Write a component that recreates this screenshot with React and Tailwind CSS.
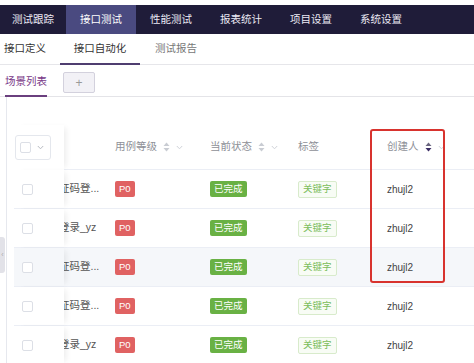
import React from 'react';

const SortIcon = ({ active }) => (
  <svg width="7" height="10" viewBox="0 0 7 10" className="ml-[6px]">
    <path d="M3.5 0.5 L6.5 4 H0.5 Z" fill={active ? '#6b6680' : '#c9ccd3'} />
    <path d="M0.5 6 H6.5 L3.5 9.5 Z" fill={active ? '#3a2c63' : '#c9ccd3'} />
  </svg>
);

const Chevron = ({ color = '#cfd2d8' }) => (
  <svg width="7" height="5" viewBox="0 0 7 5" className="ml-[6px]">
    <path d="M0.8 1 L3.5 3.8 L6.2 1" fill="none" stroke={color} strokeWidth="1" />
  </svg>
);

const Check = () => <span className="w-[11px] h-[11px] border border-[#dcdfe6] rounded-[2px] bg-white" />;

const rows = [
  { name: '证码登...', hl: false },
  { name: '登录_yz', hl: false },
  { name: '证码登...', hl: true },
  { name: '证码登...', hl: false },
  { name: '登录_yz', hl: false },
];

const navTabs = ['测试跟踪', '接口测试', '性能测试', '报表统计', '项目设置', '系统设置'];

export default function App() {
  return (
    <div className="w-[474px] h-[363px] overflow-hidden bg-white relative font-['Liberation_Sans','Noto_Sans_CJK_SC',sans-serif] text-[10.5px]">
      <div className="h-[5px]" />
      <nav className="h-[29px] bg-[#1f1c39] flex text-[#eceaf5]">
        {navTabs.map((t, i) => (
          <div
            key={t}
            className={
              'h-full flex items-center justify-center ' +
              (i === 0 ? 'w-[66px] ' : 'w-[70px] ') +
              (i === 1 ? 'bg-[#4a4a80] text-white' : '')
            }
          >
            {t}
          </div>
        ))}
      </nav>

      <div className="h-[31px] flex border-b border-[#e6e6ea] text-[#333]">
        <div className="w-[60px] pl-[4px] flex items-center">接口定义</div>
        <div className="w-[80px] flex items-center justify-center border-b-2 border-[#4f3e70] -mb-px">接口自动化</div>
        <div className="pl-[15px] flex items-center text-[#777]">测试报告</div>
      </div>

      <div className="h-[32px] flex border-b border-[#e4e4e8]">
        <div className="ml-[5px] pt-[3px] flex items-center border-b-2 border-[#6a3f7e] -mb-px text-[#783887]">场景列表</div>
        <div className="ml-[16px] mt-[7px] w-[32px] h-[21px] bg-[#f2f1f6] border border-[#d3d1dd] rounded-[2px] flex items-center justify-center text-[#999] text-[12px]">
          +
        </div>
      </div>

      <div className="ml-[6px] border-l border-[#e6e8ee] pl-[7px] pt-[28px] h-[266px]">
        <div className="flex h-[45px] items-center text-[#8e9097]">
          <div className="w-[50px] h-full bg-white relative z-10 shadow-[5px_0_6px_-3px_rgba(0,0,0,0.08)] flex items-center">
            <div className="ml-[1px] w-[36px] h-[25px] border border-[#e4e7ed] rounded-[3px] flex items-center pl-[4px]">
              <Check />
              <Chevron color="#b8bbc2" />
            </div>
          </div>
          <div className="flex-1 h-full flex items-center border-b border-[#ebeef5]">
            <div className="w-[51px]" />
            <div className="w-[95px] flex items-center">用例等级<SortIcon /><Chevron /></div>
            <div className="w-[88px] flex items-center">当前状态<SortIcon /><Chevron /></div>
            <div className="w-[89px] flex items-center">标签</div>
            <div className="flex-1 flex items-center">创建人<SortIcon active /><Chevron /></div>
          </div>
        </div>

        {rows.map((r, i) => (
          <div
            key={i}
            className={'flex h-[39px] items-center border-b border-[#ebeef5] ' + (r.hl ? 'bg-[#f5f7fa]' : 'bg-white')}
          >
            <div
              className={
                'w-[50px] h-full relative z-10 shadow-[5px_0_6px_-3px_rgba(0,0,0,0.08)] flex items-center pl-[8px] ' +
                (r.hl ? 'bg-[#f5f7fa]' : 'bg-white')
              }
            >
              <Check />
            </div>
            <div className="w-[51px] overflow-hidden whitespace-nowrap text-[#555]">
              <span className="block -ml-[5px]">{r.name}</span>
            </div>
            <div className="w-[95px]">
              <span className="inline-flex items-center h-[16px] px-[4px] rounded-[2px] bg-[#e06262] text-white text-[9.5px]">P0</span>
            </div>
            <div className="w-[88px]">
              <span className="inline-flex items-center h-[16px] px-[4px] rounded-[2px] bg-[#69b144] text-white text-[9.5px]">已完成</span>
            </div>
            <div className="w-[89px]">
              <span className="inline-flex items-center h-[17px] px-[4px] rounded-[2px] bg-[#f8fcf5] border border-[#d8ebcb] text-[#7bbd5a] text-[9.5px]">关键字</span>
            </div>
            <div className="flex-1 text-[#444] text-[10px]">zhujl2</div>
          </div>
        ))}
      </div>

      <div className="absolute left-[370px] top-[129px] w-[75px] h-[154px] border-2 border-[#d8332e] rounded-[3px]" />

      <div className="absolute left-0 top-[237px] w-[5px] h-[36px] bg-[#e2e2e8] rounded-r-[3px] flex items-center justify-center text-[#aaa] text-[7px]">
        ‹
      </div>
    </div>
  );
}
